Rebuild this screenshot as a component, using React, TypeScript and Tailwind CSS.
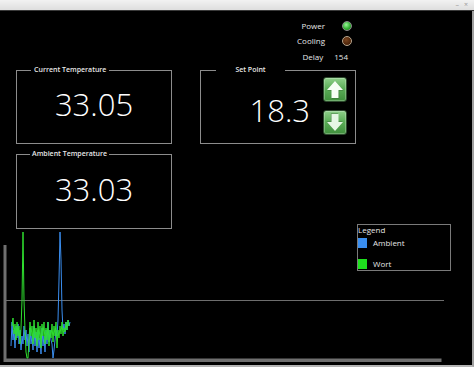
import React from "react";

const green: [number, number][] = [
  [12,326],[13,318],[14,334],[15,324],[16,340],[17,322],[18,336],[19,326],[20,344],[21,328],[22,300],[23,232],[24,300],[25,330],[26,352],[27,358],[28,358],[29,340],[30,322],[31,336],[32,326],[33,344],[34,320],[35,338],[36,328],[37,346],[38,322],[39,340],[40,326],[41,348],[42,324],[43,336],[44,322],[45,344],[46,328],[47,340],[48,322],[49,346],[50,330],[51,338],[52,324],[53,342],[54,326],[55,336],[56,322],[57,348],[58,330],[59,338],[60,326],[61,334],[62,322],[63,336],[64,328],[65,332],[66,322],[67,330],[68,320],[69,326],
];
const blue: [number, number][] = [
  [11,346],[12,322],[13,340],[14,330],[15,348],[16,326],[17,338],[18,324],[19,344],[20,330],[21,350],[22,336],[23,344],[24,326],[25,340],[26,330],[27,346],[28,334],[29,352],[30,328],[31,344],[32,336],[33,350],[34,326],[35,346],[36,332],[37,352],[38,330],[39,348],[40,338],[41,354],[42,328],[43,346],[44,336],[45,352],[46,330],[47,344],[48,322],[49,342],[50,330],[51,340],[52,344],[53,358],[54,350],[55,340],[56,330],[57,336],[58,320],[59,280],[60,232],[61,260],[62,310],[63,330],[64,324],[65,334],[66,322],[67,330],[68,320],[69,326],[70,322],
];
const pts = (a: [number, number][]) => a.map(([x, y]) => `${x},${y}`).join(" ");

function ArrowButton({ down }: { down?: boolean }) {
  return (
    <div className="w-[24px] h-[25px] rounded-[3px] border border-[#2d4a2d] bg-[linear-gradient(180deg,#8fd08a_0%,#5cae58_45%,#3f8f3c_100%)] shadow-[inset_0_0_0_1px_rgba(255,255,255,0.25)] flex items-center justify-center">
      <svg width="22" height="23" viewBox="0 0 22 23" className={down ? "rotate-180" : ""}>
        <polygon points="11,3 3,12 7.5,12 7.5,20 14.5,20 14.5,12 19,12" fill="#2f5f2e" opacity="0.5" transform="translate(0.6,0.8)" />
        <polygon points="11,3 3,12 7.5,12 7.5,20 14.5,20 14.5,12 19,12" fill={down ? "#e6f7e4" : "#f6fff5"} />
      </svg>
    </div>
  );
}

function GroupBox({ title, titleClass, children, className }: { title: string; titleClass: string; children: React.ReactNode; className: string }) {
  return (
    <div className={"relative border border-[#8c8c8c] " + className}>
      <div className={"absolute -top-[6px] h-[10px] leading-[10px] bg-black text-[7px] font-semibold text-[#e8e8e8] whitespace-nowrap " + titleClass}>{title}</div>
      {children}
    </div>
  );
}

export default function App() {
  return (
    <div className="w-[474px] h-[367px] flex flex-col bg-black overflow-hidden" style={{ fontFamily: "'Open Sans', Roboto, 'Liberation Sans', sans-serif" }}>
      <div className="h-[11px] shrink-0 bg-[linear-gradient(180deg,#f2f2f2,#dedede)] border-b border-[#3a3a3a] flex items-start justify-end pr-[6px] gap-[5px]">
        <span className="text-[7px] leading-[9px] text-[#9a9a9a]">–</span>
        <span className="text-[7px] leading-[9px] text-[#9a9a9a]">×</span>
      </div>
      <div className="relative flex-1 flex flex-col border-r-2 border-b-2 border-r-[#a0a0a0] border-b-[#b4b4b4] text-white">
        <div className="flex justify-end pr-[120px] pt-[7px] h-[59px] shrink-0">
          <div className="flex flex-col items-end text-[8px] text-[#e6e6e6]">
            <div className="h-[15px] flex items-center">
              <span>Power</span>
              <span className="ml-[17px] w-[10px] h-[10px] rounded-full border border-[#8a8a8a] bg-[radial-gradient(circle_at_40%_35%,#9af59a,#33b133_55%,#1b6e1b)]" />
            </div>
            <div className="h-[15px] flex items-center">
              <span>Cooling</span>
              <span className="ml-[17px] w-[10px] h-[10px] rounded-full border border-[#b8a68e] bg-[radial-gradient(circle_at_40%_35%,#7a4520,#4a2208_70%,#3a1a06)]" />
            </div>
            <div className="h-[16px] mt-[1px] flex items-center">
              <span>Delay</span>
              <span className="ml-[11px] mr-[4px]">154</span>
            </div>
          </div>
        </div>
        <div className="flex pl-[16px] shrink-0">
          <div className="flex flex-col">
            <GroupBox title="Current Temperature" titleClass="left-[14px] px-[3px]" className="w-[156px] h-[74px] flex items-center justify-center pb-[5px]">
              <span className="text-[31px] font-light leading-none">33.05</span>
            </GroupBox>
            <GroupBox title="Ambient Temperature" titleClass="left-[13px] px-[2px]" className="mt-[10px] w-[156px] h-[75px] flex items-center justify-center pb-[4px]">
              <span className="text-[31px] font-light leading-none">33.03</span>
            </GroupBox>
          </div>
          <GroupBox title="Set Point" titleClass="left-[15px] w-[69px] text-center" className="ml-[28px] w-[156px] h-[74px] flex items-start justify-end pr-[8px] pt-[6px]">
            <span className="self-center text-[31px] font-light leading-none mr-[13px]">18.3</span>
            <div className="flex flex-col gap-[8px]">
              <ArrowButton />
              <ArrowButton down />
            </div>
          </GroupBox>
        </div>
        <div className="flex-1">
          <svg width="472" height="136" viewBox="0 229 472 136" className="block">
            <rect x="3.5" y="245" width="3" height="117" fill="#6f6f6f" />
            <rect x="4" y="358.5" width="437.5" height="3.5" fill="#6f6f6f" />
            <line x1="6" y1="300.5" x2="444" y2="300.5" stroke="#6e6e6e" strokeWidth="1" />
            <polyline points={pts(blue)} fill="none" stroke="#3a8ef0" strokeWidth="1" />
            <polyline points={pts(green)} fill="none" stroke="#2fe02f" strokeWidth="1" />
          </svg>
        </div>
        <div className="absolute left-[357px] top-[213px] w-[94px] h-[47px] border border-[#7a7a7a] text-[8px] text-[#e6e6e6]">
          <div className="h-[10px] leading-[10px]">Legend</div>
          <div className="mt-[3px] h-[10px] flex items-center">
            <span className="w-[9px] h-[10px] bg-[#3a8ef0]" />
            <span className="ml-[6px]">Ambient</span>
          </div>
          <div className="mt-[11px] h-[10px] flex items-center">
            <span className="w-[9px] h-[10px] bg-[#1ee01e]" />
            <span className="ml-[6px]">Wort</span>
          </div>
        </div>
      </div>
    </div>
  );
}
